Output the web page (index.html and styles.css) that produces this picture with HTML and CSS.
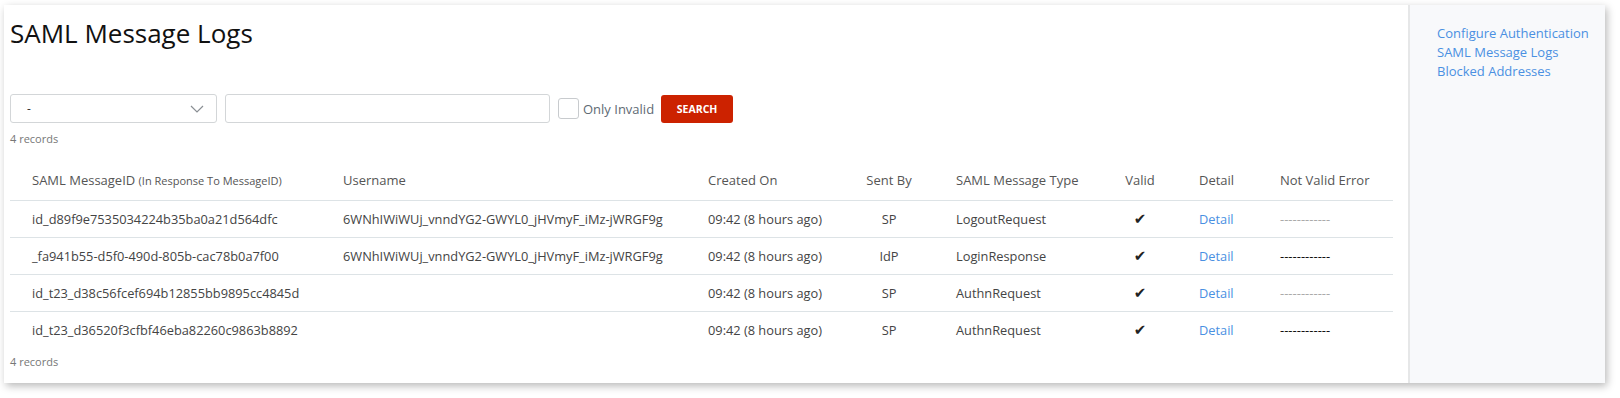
FILE: index.html
```html
<!DOCTYPE html>
<html lang="en">

<head>
    <meta charset="utf-8">
    <meta name="viewport" content="width=device-width, initial-scale=1.0">
    <title>SAML Message Logs</title>
    <link rel="stylesheet" href="styles.css">
</head>

<body>
    <div class="kort">
        <main class="indhold">
            <h1>SAML Message Logs</h1>

            <form class="filter">
                <div class="vaelger">
                    <span>-</span>
                    <svg width="14" height="8" viewBox="0 0 14 8">
                        <path d="M1 1 L7 7 L13 1" fill="none" stroke="#8a8f94" stroke-width="1.2"/>
                    </svg>
                </div>
                <input type="text" class="soeg">
                <label class="kun-ugyldige">
                    <span class="boks"></span>
                    Only Invalid
                </label>
                <button type="button" class="soegeknap">SEARCH</button>
            </form>
            <p class="antal">4 records</p>

            <table class="logs">
                <colgroup>
                    <col style="width: 323px">
                    <col style="width: 365px">
                    <col style="width: 134px">
                    <col style="width: 114px">
                    <col style="width: 145px">
                    <col style="width: 98px">
                    <col style="width: 81px">
                    <col>
                </colgroup>
                <thead>
                    <tr>
                        <th class="foerste">SAML MessageID <small>(In Response To MessageID)</small></th>
                        <th>Username</th>
                        <th>Created On</th>
                        <th class="midt">Sent By</th>
                        <th>SAML Message Type</th>
                        <th class="midt">Valid</th>
                        <th>Detail</th>
                        <th>Not Valid Error</th>
                    </tr>
                </thead>
                <tbody>
                    <tr>
                        <td class="foerste">id_d89f9e7535034224b35ba0a21d564dfc</td>
                        <td>6WNhIWiWUj_vnndYG2-GWYL0_jHVmyF_iMz-jWRGF9g</td>
                        <td>09:42 (8 hours ago)</td>
                        <td class="midt">SP</td>
                        <td>LogoutRequest</td>
                        <td class="midt flueben">&#10004;</td>
                        <td><a href="#">Detail</a></td>
                        <td class="streg lys">------------</td>
                    </tr>
                    <tr>
                        <td class="foerste">_fa941b55-d5f0-490d-805b-cac78b0a7f00</td>
                        <td>6WNhIWiWUj_vnndYG2-GWYL0_jHVmyF_iMz-jWRGF9g</td>
                        <td>09:42 (8 hours ago)</td>
                        <td class="midt">IdP</td>
                        <td>LoginResponse</td>
                        <td class="midt flueben">&#10004;</td>
                        <td><a href="#">Detail</a></td>
                        <td class="streg">------------</td>
                    </tr>
                    <tr>
                        <td class="foerste">id_t23_d38c56fcef694b12855bb9895cc4845d</td>
                        <td></td>
                        <td>09:42 (8 hours ago)</td>
                        <td class="midt">SP</td>
                        <td>AuthnRequest</td>
                        <td class="midt flueben">&#10004;</td>
                        <td><a href="#">Detail</a></td>
                        <td class="streg lys">------------</td>
                    </tr>
                    <tr>
                        <td class="foerste">id_t23_d36520f3cfbf46eba82260c9863b8892</td>
                        <td></td>
                        <td>09:42 (8 hours ago)</td>
                        <td class="midt">SP</td>
                        <td>AuthnRequest</td>
                        <td class="midt flueben">&#10004;</td>
                        <td><a href="#">Detail</a></td>
                        <td class="streg">------------</td>
                    </tr>
                </tbody>
            </table>
            <p class="antal bund">4 records</p>
        </main>

        <aside class="sidebar">
            <a href="#">Configure Authentication</a>
            <a href="#">SAML Message Logs</a>
            <a href="#">Blocked Addresses</a>
        </aside>
    </div>
</body>

</html>
```

FILE: styles.css
```css
body {
    margin: 0;
    padding: 5px 15px 15px 4px;
    background-color: #ffffff;
    font-family: 'Open Sans', 'Liberation Sans', sans-serif;
    color: #444444;
}

.kort {
    display: flex;
    height: 378px;
    background-color: #ffffff;
    box-shadow: 2px 3px 8px rgba(0, 0, 0, 0.28);
}

.indhold {
    flex: 1;
    padding: 11px 15px 0 6px;
}

h1 {
    margin: 0;
    font-size: 26px;
    font-weight: 400;
    line-height: 35px;
    color: #111111;
}

.filter {
    display: flex;
    align-items: center;
    margin-top: 43px;
    height: 29px;
}

.vaelger {
    display: flex;
    align-items: center;
    justify-content: space-between;
    box-sizing: border-box;
    width: 207px;
    height: 29px;
    padding: 0 12px 0 16px;
    border: 1px solid #d3d6d8;
    border-radius: 3px;
    font-size: 12px;
    color: #333333;
}

.soeg {
    box-sizing: border-box;
    width: 325px;
    height: 29px;
    margin: 0 0 0 8px;
    border: 1px solid #d3d6d8;
    border-radius: 3px;
}

.kun-ugyldige {
    display: flex;
    align-items: center;
    margin-left: 8px;
    font-size: 13px;
    color: #606a74;
}

.boks {
    box-sizing: border-box;
    width: 21px;
    height: 21px;
    margin-right: 4px;
    border: 1px solid #c8cbce;
    border-radius: 3px;
}

.soegeknap {
    width: 72px;
    height: 28px;
    margin-left: 7px;
    border: 0;
    border-radius: 3px;
    background-color: #cc2200;
    color: #ffffff;
    font-family: 'Open Sans', 'Liberation Sans', sans-serif;
    font-size: 10.5px;
    font-weight: 700;
}

.antal {
    margin: 8px 0 0 0;
    font-size: 11px;
    line-height: 15px;
    color: #777777;
}

.logs {
    width: 1383px;
    margin-top: 14px;
    border-collapse: collapse;
    table-layout: fixed;
    font-size: 13px;
}

.logs th {
    height: 40px;
    padding: 0 10px;
    text-align: left;
    font-weight: 400;
    color: #555555;
    white-space: nowrap;
}

.logs th small {
    font-size: 11px;
}

.logs td {
    height: 36px;
    padding: 0 10px;
    border-top: 1px solid #dde3e6;
    font-size: 12.8px;
    color: #444444;
    white-space: nowrap;
}

.logs .foerste {
    padding-left: 22px;
}

.logs .midt {
    text-align: center;
}

.logs .flueben {
    font-family: 'DejaVu Sans', sans-serif;
    font-size: 15px;
    color: #222222;
}

.logs a {
    color: #4a90e2;
    text-decoration: none;
}

.logs .streg {
    font-size: 13px;
    color: #111111;
}

.logs .streg.lys {
    color: #aaaaaa;
}

.bund {
    margin-top: 6px;
}

.sidebar {
    display: flex;
    flex-direction: column;
    width: 195px;
    padding: 19px 0 0 27px;
    border-left: 2px solid #e6e7e8;
    background-color: #f8f9fb;
    font-size: 13px;
    line-height: 19px;
}

.sidebar a {
    color: #4a90e2;
    text-decoration: none;
}
```
